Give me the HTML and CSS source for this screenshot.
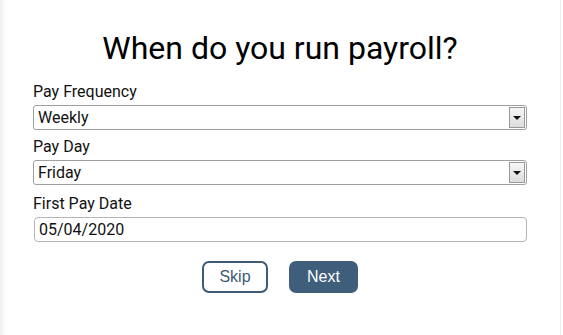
FILE: index.html
```html
<!DOCTYPE html>
<html lang="en">
<head>
  <meta charset="UTF-8" />
  <title>Payroll Setup</title>
  <link rel="stylesheet" href="styles.css">
</head>
<body>
  <div class="frame">
    <h1>When do you run payroll?</h1>

    <form class="setup" autocomplete="off">
      <label for="frecuencia">Pay Frequency</label>
      <div class="select-box">
        <select id="frecuencia">
          <option>Weekly</option>
          <option>Bi-Weekly</option>
          <option>Monthly</option>
        </select>
        <span class="arrow"></span>
      </div>

      <label for="dia">Pay Day</label>
      <div class="select-box last">
        <select id="dia">
          <option>Friday</option>
          <option>Thursday</option>
        </select>
        <span class="arrow"></span>
      </div>

      <label for="fecha">First Pay Date</label>
      <input type="text" id="fecha" value="05/04/2020" />

      <div class="acciones">
        <button type="button" class="skip">Skip</button>
        <button type="submit" class="next">Next</button>
      </div>
    </form>
  </div>
</body>
</html>
```

FILE: styles.css
```css
* {
  box-sizing: border-box;
}
body {
  margin: 0;
  background: #fff;
  font-family: Roboto, 'Noto Sans', sans-serif;
  color: #111;
}

.frame {
  width: 561px;
  min-height: 335px;
  border-right: 1px solid #ececec;
  box-shadow: inset 7px 0 6px -5px rgb(0 0 0 / 0.09);
  padding: 28px 33px 0 33px;
}

h1 {
  margin: 0 0 14px;
  text-align: center;
  font-size: 32px;
  font-weight: 400;
  line-height: 40px;
  color: #000;
}

.setup {
  display: flex;
  flex-direction: column;
}

label {
  font-size: 16px;
  line-height: 20px;
  margin-bottom: 3px;
  color: #111;
}

.select-box {
  display: flex;
  height: 25px;
  border: 1px solid #a0a0a0;
  border-radius: 3px;
  background: #fff;
  margin-bottom: 7px;
}
.select-box.last {
  margin-bottom: 9px;
}
.select-box select {
  flex: 1;
  appearance: none;
  border: none;
  background: transparent;
  font-family: inherit;
  font-size: 16px;
  color: #111;
  padding: 0 4px;
  outline: none;
}
.arrow {
  width: 16px;
  margin: 1px 1px 1px 0;
  border: 1px solid #9a9a9a;
  background: linear-gradient(#f6f6f6, #dcdcdc);
  display: flex;
  align-items: center;
  justify-content: center;
}
.arrow::after {
  content: '';
  border-left: 4px solid transparent;
  border-right: 4px solid transparent;
  border-top: 4px solid #111;
  margin-top: 1px;
}

input[type="text"] {
  height: 25px;
  margin-left: 1px;
  border: 1px solid #b4b4b4;
  border-radius: 4px;
  font-family: inherit;
  font-size: 16px;
  color: #111;
  padding: 0 4px;
}

.acciones {
  display: flex;
  justify-content: center;
  gap: 21px;
  margin-top: 19px;
}
.acciones button {
  height: 32px;
  border-radius: 7px;
  font-family: 'Liberation Sans', Arial, sans-serif;
  font-size: 16px;
  cursor: pointer;
}
.skip {
  width: 66px;
  background: #fff;
  border: 2px solid #3d5a76;
  color: #3d5a76;
}
.next {
  width: 69px;
  background: #3e5e7c;
  border: none;
  color: #fff;
}
```
